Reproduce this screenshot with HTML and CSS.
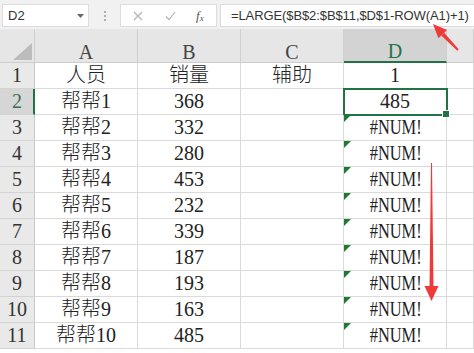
FILE: index.html
```html
<!DOCTYPE html>
<html lang="zh">
<head>
<meta charset="utf-8">
<title>LARGE</title>
<link rel="stylesheet" href="styles.css">
</head>
<body>
<div class="app">
  <div class="toolbar">
    <div class="namebox">
      <span class="name">D2</span>
      <svg class="caret" width="7" height="4" viewBox="0 0 7 4"><path d="M0 0H7L3.5 4Z" fill="#666"/></svg>
    </div>
    <div class="grip"><i></i><i></i><i></i></div>
    <div class="fxbox">
      <svg class="ic" width="10" height="10" viewBox="0 0 10 10"><path d="M1 1L9 9M9 1L1 9" stroke="#b4b4b4" stroke-width="1.2" fill="none"/></svg>
      <svg class="ic" width="11" height="10" viewBox="0 0 11 10"><path d="M1 5.5L4 8.5L10 1" stroke="#b4b4b4" stroke-width="1.2" fill="none"/></svg>
      <span class="fx">f<sub>x</sub></span>
    </div>
    <div class="formula">=LARGE($B$2:$B$11,$D$1-ROW(A1)+1)</div>
  </div>

  <div class="sheet">
    <div class="corner"><span class="tri"></span></div>
    <div class="ch">A</div><div class="ch">B</div><div class="ch">C</div><div class="ch act">D</div><div class="ch"></div>

    <div class="rh">1</div><div class="c">人员</div><div class="c">销量</div><div class="c">辅助</div><div class="c">1</div><div class="c"></div>
    <div class="rh act">2</div><div class="c">帮帮1</div><div class="c">368</div><div class="c"></div><div class="c sel">485</div><div class="c"></div>
    <div class="rh">3</div><div class="c">帮帮2</div><div class="c">332</div><div class="c"></div><div class="c err"><span class="num">#NUM!</span></div><div class="c"></div>
    <div class="rh">4</div><div class="c">帮帮3</div><div class="c">280</div><div class="c"></div><div class="c err"><span class="num">#NUM!</span></div><div class="c"></div>
    <div class="rh">5</div><div class="c">帮帮4</div><div class="c">453</div><div class="c"></div><div class="c err"><span class="num">#NUM!</span></div><div class="c"></div>
    <div class="rh">6</div><div class="c">帮帮5</div><div class="c">232</div><div class="c"></div><div class="c err"><span class="num">#NUM!</span></div><div class="c"></div>
    <div class="rh">7</div><div class="c">帮帮6</div><div class="c">339</div><div class="c"></div><div class="c err"><span class="num">#NUM!</span></div><div class="c"></div>
    <div class="rh">8</div><div class="c">帮帮7</div><div class="c">187</div><div class="c"></div><div class="c err"><span class="num">#NUM!</span></div><div class="c"></div>
    <div class="rh">9</div><div class="c">帮帮8</div><div class="c">193</div><div class="c"></div><div class="c err"><span class="num">#NUM!</span></div><div class="c"></div>
    <div class="rh">10</div><div class="c">帮帮9</div><div class="c">163</div><div class="c"></div><div class="c err"><span class="num">#NUM!</span></div><div class="c"></div>
    <div class="rh">11</div><div class="c">帮帮10</div><div class="c">485</div><div class="c"></div><div class="c err"><span class="num">#NUM!</span></div><div class="c"></div>
  </div>

  <svg class="arrows" width="474" height="353" viewBox="0 0 474 353">
    <polygon points="458.7,49.3 457.3,50.7 441.3,35.5 444.1,32.7" fill="#f03a3a"/>
    <polygon points="433,24 447,30 438.4,38.2" fill="#f03a3a"/>
    <polygon points="431,163 432,163 433.5,288 429.5,288" fill="#f03a3a"/>
    <polygon points="424.5,286 438.5,286 431.5,301" fill="#f03a3a"/>
  </svg>
</div>
</body>
</html>
```

FILE: styles.css
```css
* { box-sizing: border-box; }
html, body { margin: 0; padding: 0; background: #ffffff; }

.app {
  position: relative;
  width: 474px;
  height: 353px;
  overflow: hidden;
  font-family: "Liberation Serif", "Noto Sans CJK SC", serif;
  font-weight: 300;
  color: #222;
}

/* ---------- toolbar ---------- */
.toolbar {
  height: 29px;
  background: #f1f1f1;
  display: flex;
  align-items: flex-start;
  padding-top: 4px;
  font-family: "Liberation Sans", "Noto Sans CJK SC", sans-serif;
  font-weight: 400;
}
.namebox {
  margin-left: 2px;
  width: 87px;
  height: 23px;
  background: #fff;
  border: 1px solid #dcdcdc;
  display: flex;
  align-items: center;
  justify-content: space-between;
  padding: 0 4px 0 5px;
}
.name { font-size: 13px; color: #333; }
.grip {
  width: 31px;
  height: 23px;
  display: flex;
  flex-direction: column;
  align-items: center;
  justify-content: center;
  gap: 2px;
}
.grip i {
  display: block;
  width: 2px;
  height: 2px;
  background: #b0b0b0;
}
.fxbox {
  width: 97px;
  height: 23px;
  background: #fff;
  border: 1px solid #dcdcdc;
  display: flex;
  align-items: center;
  padding-left: 12px;
  gap: 22px;
}
.fx {
  font-family: "Liberation Serif", serif;
  font-style: italic;
  font-size: 13px;
  color: #555;
  margin-left: -2px;
}
.fx sub { font-size: 9px; vertical-align: -1px; }
.formula {
  flex: 1;
  margin-left: 3px;
  height: 23px;
  background: #fff;
  border: 1px solid #dcdcdc;
  border-right: none;
  padding-left: 10px;
  font-size: 13px;
  letter-spacing: -0.1px;
  line-height: 21px;
  color: #333;
  white-space: nowrap;
}

/* ---------- sheet ---------- */
.sheet {
  display: grid;
  grid-template-columns: 35px 103px 103px 103px 103px 1fr;
  grid-template-rows: 34px repeat(11, 26px);
  font-size: 20px;
}
.corner, .ch {
  background: #e6e6e6;
  border-right: 1px solid #cfcfcf;
  border-bottom: 1px solid #cdcdcd;
}
.corner { position: relative; }
.tri {
  position: absolute;
  right: 2px;
  bottom: 2px;
  width: 0;
  height: 0;
  border-left: 19px solid transparent;
  border-bottom: 17px solid #bcbcbc;
}
.ch {
  display: flex;
  align-items: flex-end;
  justify-content: center;
  line-height: 20px;
  color: #444;
}
.ch.act {
  background: #d3d3d3;
  border-bottom: 2px solid #217346;
  color: #217346;
}
.rh {
  background: #e9e9e9;
  border-right: 1px solid #c9c9c9;
  border-bottom: 1px solid #d3d3d3;
  display: flex;
  align-items: center;
  justify-content: center;
  line-height: 25px;
  color: #333;
}
.rh.act {
  background: #d6d6d6;
  border-right: 2px solid #217346;
  color: #3d6b50;
  padding-left: 1px;
}
.c {
  position: relative;
  border-right: 1px solid #dadada;
  border-bottom: 1px solid #dadada;
  display: flex;
  align-items: center;
  justify-content: center;
  line-height: 25px;
  white-space: nowrap;
}
.sel::after {
  content: "";
  position: absolute;
  left: -1px;
  top: -1px;
  right: -2px;
  bottom: -2px;
  border: 2px solid #217346;
}
.sel::before {
  content: "";
  position: absolute;
  right: -4px;
  bottom: -4px;
  width: 6px;
  height: 6px;
  background: #217346;
  border: 1px solid #fff;
  z-index: 1;
}
.err::before {
  content: "";
  position: absolute;
  left: 0;
  top: 0;
  width: 0;
  height: 0;
  border-top: 7px solid #1d7a30;
  border-right: 7px solid transparent;
}
.num {
  display: inline-block;
  transform: scaleX(0.82);
  margin-left: 2px;
}

/* ---------- annotation arrows ---------- */
.arrows {
  position: absolute;
  left: 0;
  top: 0;
  pointer-events: none;
}
```
